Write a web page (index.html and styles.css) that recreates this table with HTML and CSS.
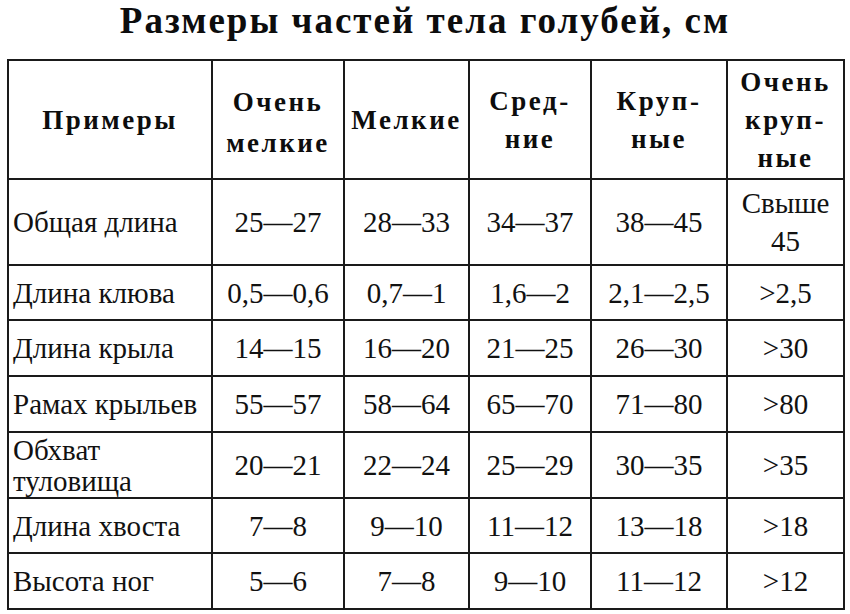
FILE: index.html
```html
<!DOCTYPE html>
<html>
<head>
<meta charset="utf-8">
<title>Размеры частей тела голубей</title>
<link rel="stylesheet" href="styles.css">
</head>
<body>
<div class="page">
  <h1 class="title">Размеры частей тела голубей, см</h1>
  <table class="sizes">
    <colgroup>
      <col class="c1"><col class="c2"><col class="c3"><col class="c4"><col class="c5"><col class="c6">
    </colgroup>
    <thead>
      <tr class="r-head">
        <th>Примеры</th>
        <th class="wide">Очень<br>мелкие</th>
        <th>Мелкие</th>
        <th>Сред-<br>ние</th>
        <th>Круп-<br>ные</th>
        <th>Очень<br>круп-<br>ные</th>
      </tr>
    </thead>
    <tbody>
      <tr class="r1">
        <td class="name">Общая длина</td>
        <td>25—27</td><td>28—33</td><td>34—37</td><td>38—45</td><td class="two">Свыше<br>45</td>
      </tr>
      <tr class="r2">
        <td class="name">Длина клюва</td>
        <td>0,5—0,6</td><td>0,7—1</td><td>1,6—2</td><td>2,1—2,5</td><td>&gt;2,5</td>
      </tr>
      <tr class="r3">
        <td class="name">Длина крыла</td>
        <td>14—15</td><td>16—20</td><td>21—25</td><td>26—30</td><td>&gt;30</td>
      </tr>
      <tr class="r4">
        <td class="name">Рамах крыльев</td>
        <td>55—57</td><td>58—64</td><td>65—70</td><td>71—80</td><td>&gt;80</td>
      </tr>
      <tr class="r5">
        <td class="name name-two">Обхват<br>туловища</td>
        <td>20—21</td><td>22—24</td><td>25—29</td><td>30—35</td><td>&gt;35</td>
      </tr>
      <tr class="r6">
        <td class="name">Длина хвоста</td>
        <td>7—8</td><td>9—10</td><td>11—12</td><td>13—18</td><td>&gt;18</td>
      </tr>
      <tr class="r7">
        <td class="name">Высота ног</td>
        <td>5—6</td><td>7—8</td><td>9—10</td><td>11—12</td><td>&gt;12</td>
      </tr>
    </tbody>
  </table>
</div>
</body>
</html>
```
FILE: styles.css
```css
html, body {
  margin: 0;
  padding: 0;
  background: #ffffff;
  font-family: "Liberation Serif";
}

.page {
  width: 850px;
  height: 614px;
  overflow: hidden;
  color: #111111;
  font-family: "Liberation Serif";
}

.title {
  margin: 0;
  height: 59px;
  text-align: center;
  font-family: "Liberation Serif";
  font-size: 37px;
  line-height: 42px;
  font-weight: bold;
  letter-spacing: 2px;
  color: #0d0d0d;
}

.sizes {
  margin-left: 7px;
  width: 836px;
  border-collapse: collapse;
  table-layout: fixed;
  font-family: "Liberation Serif";
}

.c1 { width: 204px; }
.c2 { width: 132px; }
.c3 { width: 125px; }
.c4 { width: 122px; }
.c5 { width: 136px; }
.c6 { width: 117px; }

.sizes th,
.sizes td {
  border: 2px solid #1a1a1a;
  padding: 0;
  text-align: center;
  vertical-align: middle;
  font-family: "Liberation Serif";
  font-size: 29px;
  line-height: 34px;
  white-space: nowrap;
  color: #111111;
}

.sizes th {
  font-weight: bold;
  font-size: 27px;
  line-height: 38px;
  letter-spacing: 2.5px;
  color: #0d0d0d;
}

.sizes th.wide {
  line-height: 41px;
  padding-top: 6px;
}

.sizes td.name {
  text-align: left;
  padding-left: 4px;
}

.sizes td.two { line-height: 38px; }
.sizes td.name-two {
  line-height: 31px;
  padding-top: 2px;
}

.r-head { height: 119px; }
.r1 { height: 86px; }
.r2 { height: 55px; }
.r3 { height: 56px; }
.r4 { height: 56px; }
.r5 { height: 65px; }
.r6 { height: 55px; }
.r7 { height: 56px; }
```
